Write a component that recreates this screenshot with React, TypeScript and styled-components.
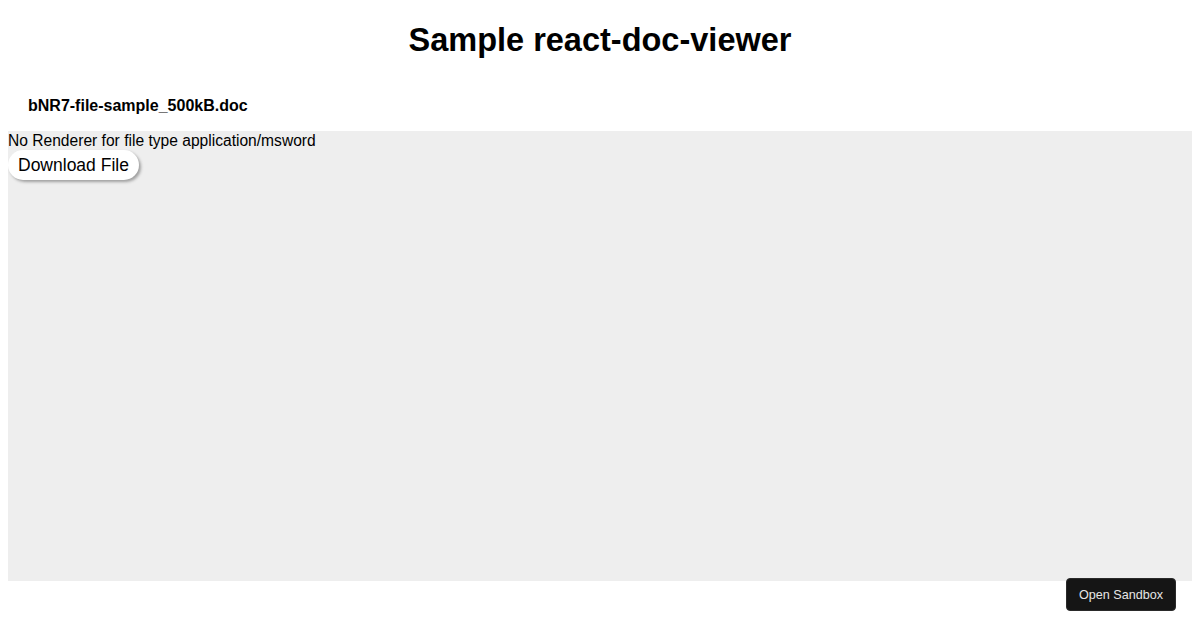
import React from "react";
import styled, { createGlobalStyle } from "styled-components";

const GlobalStyle = createGlobalStyle`
  body {
    margin: 8px;
    font-family: "Liberation Sans", Arial, sans-serif;
    background: #fff;
    color: #000;
  }
`;

const Title = styled.h1`
  margin: 14px 0 21px;
  text-align: center;
  font-size: 32.5px;
  font-weight: 700;
`;

const FileHeader = styled.div`
  display: flex;
  align-items: center;
  height: 51px;
  padding: 0 20px;
  font-size: 16px;
  font-weight: 700;
`;

const Viewer = styled.div`
  height: 450px;
  background: #eeeeee;
  font-size: 15.6px;
`;

const NoRenderer = styled.div`
  line-height: 19px;
`;

const DownloadButton = styled.button`
  display: inline-block;
  padding: 4px 10px;
  margin: 0;
  border: none;
  border-radius: 15px;
  background: #fff;
  font-family: "Liberation Sans", Arial, sans-serif;
  font-size: 17.5px;
  line-height: 22px;
  color: #000;
  box-shadow: 2px 2px 3px #a0a0a0;
  cursor: pointer;
`;

const SandboxButton = styled.button`
  position: fixed;
  right: 24px;
  bottom: 19px;
  height: 33px;
  padding: 0 12px;
  border: 1px solid #2a2a2a;
  border-radius: 4px;
  background: #151515;
  color: #e6e6e6;
  font-family: "Liberation Sans", Arial, sans-serif;
  font-size: 12.6px;
  cursor: pointer;
`;

export default function App() {
  return (
    <>
      <GlobalStyle />
      <Title>Sample react-doc-viewer</Title>
      <FileHeader>bNR7-file-sample_500kB.doc</FileHeader>
      <Viewer>
        <NoRenderer>No Renderer for file type application/msword</NoRenderer>
        <DownloadButton>Download File</DownloadButton>
      </Viewer>
      <SandboxButton>Open Sandbox</SandboxButton>
    </>
  );
}
